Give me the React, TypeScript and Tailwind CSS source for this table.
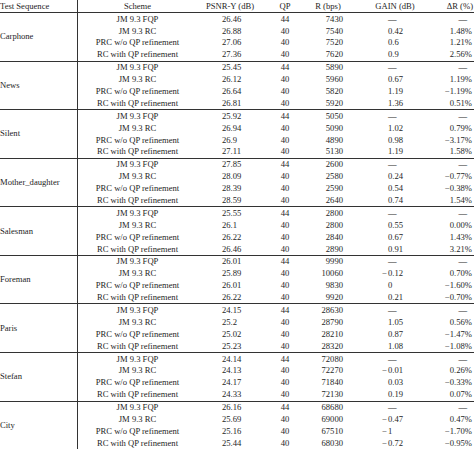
import React from 'react';

type Row = [string, string, string, string, string];

interface Group {
  name: string;
  rows: Row[];
}

const schemes = ['JM 9.3 FQP', 'JM 9.3 RC', 'PRC w/o QP refinement', 'RC with QP refinement'];

const groups: Group[] = [
  { name: 'Carphone', rows: [
    ['26.46', '44', '7430', '—', '—'],
    ['26.88', '40', '7540', '0.42', '1.48%'],
    ['27.06', '40', '7520', '0.6', '1.21%'],
    ['27.36', '40', '7620', '0.9', '2.56%'],
  ] },
  { name: 'News', rows: [
    ['25.45', '44', '5890', '—', '—'],
    ['26.12', '40', '5960', '0.67', '1.19%'],
    ['26.64', '40', '5820', '1.19', '−1.19%'],
    ['26.81', '40', '5920', '1.36', '0.51%'],
  ] },
  { name: 'Silent', rows: [
    ['25.92', '44', '5050', '—', '—'],
    ['26.94', '40', '5090', '1.02', '0.79%'],
    ['26.9', '40', '4890', '0.98', '−3.17%'],
    ['27.11', '40', '5130', '1.19', '1.58%'],
  ] },
  { name: 'Mother_daughter', rows: [
    ['27.85', '44', '2600', '—', '—'],
    ['28.09', '40', '2580', '0.24', '−0.77%'],
    ['28.39', '40', '2590', '0.54', '−0.38%'],
    ['28.59', '40', '2640', '0.74', '1.54%'],
  ] },
  { name: 'Salesman', rows: [
    ['25.55', '44', '2800', '—', '—'],
    ['26.1', '40', '2800', '0.55', '0.00%'],
    ['26.22', '40', '2840', '0.67', '1.43%'],
    ['26.46', '40', '2890', '0.91', '3.21%'],
  ] },
  { name: 'Foreman', rows: [
    ['26.01', '44', '9990', '—', '—'],
    ['25.89', '40', '10060', '−0.12', '0.70%'],
    ['26.01', '40', '9830', '0', '−1.60%'],
    ['26.22', '40', '9920', '0.21', '−0.70%'],
  ] },
  { name: 'Paris', rows: [
    ['24.15', '44', '28630', '—', '—'],
    ['25.2', '40', '28790', '1.05', '0.56%'],
    ['25.02', '40', '28210', '0.87', '−1.47%'],
    ['25.23', '40', '28320', '1.08', '−1.08%'],
  ] },
  { name: 'Stefan', rows: [
    ['24.14', '44', '72080', '—', '—'],
    ['24.13', '40', '72270', '−0.01', '0.26%'],
    ['24.17', '40', '71840', '0.03', '−0.33%'],
    ['24.33', '40', '72130', '0.19', '0.07%'],
  ] },
  { name: 'City', rows: [
    ['26.16', '44', '68680', '—', '—'],
    ['25.69', '40', '69000', '−0.47', '0.47%'],
    ['25.16', '40', '67510', '−1', '−1.70%'],
    ['25.44', '40', '68030', '−0.72', '−0.95%'],
  ] },
];

// minus sign hangs left of the integer part, like in the paper
const Gain: React.FC<{ value: string }> = ({ value }) => {
  const neg = value.startsWith('−');
  return (
    <div className="w-[92px] flex pl-[30px]">
      <span className="w-[9px] text-right pr-[1px]">{neg ? '−' : ''}</span>
      <span>{neg ? value.slice(1) : value}</span>
    </div>
  );
};

const DataRow: React.FC<{ scheme: string; row: Row }> = ({ scheme, row }) => (
  <div className="flex h-[11.9px] items-center leading-none whitespace-nowrap">
    <div className="w-[119px] text-center">{scheme}</div>
    <div className="w-[66px] pl-[25px] text-left">{row[0]}</div>
    <div className="w-[44px] text-center">{row[1]}</div>
    <div className="w-[42px] pr-[6px] text-right">{row[2]}</div>
    <Gain value={row[3]} />
    <div className={`w-[46px] text-right ${row[4] === '—' ? 'pr-[20px]' : 'pr-[15px]'}`}>{row[4]}</div>
  </div>
);

export default function App() {
  return (
    <div className="w-[474px] h-[452px] overflow-hidden bg-white text-[#1e1e1e] text-[8.6px]" style={{ fontFamily: '"Liberation Serif", "Times New Roman", serif' }}>
      <div className="w-[487px]">
        <div className="flex h-[13px] border-b border-[#333] leading-none whitespace-nowrap">
          <div className="w-[78px] border-r border-[#333] flex items-center">Test Sequence</div>
          <div className="flex items-center">
            <div className="w-[119px] text-center">Scheme</div>
            <div className="w-[66px] text-center">PSNR-Y (dB)</div>
            <div className="w-[44px] text-center">QP</div>
            <div className="w-[42px] text-center">R (bps)</div>
            <div className="w-[92px] text-center">GAIN (dB)</div>
            <div className="w-[46px] text-right pr-[14px]">ΔR (%)</div>
          </div>
        </div>
        {groups.map((g, gi) => (
          <div key={g.name} className={`flex ${gi < groups.length - 1 ? 'border-b border-[#333]' : ''}`}>
            <div className="w-[78px] border-r border-[#333] flex items-center whitespace-nowrap">{g.name}</div>
            <div className="flex flex-col">
              {g.rows.map((r, ri) => (
                <DataRow key={ri} scheme={schemes[ri]} row={r} />
              ))}
            </div>
          </div>
        ))}
      </div>
    </div>
  );
}
